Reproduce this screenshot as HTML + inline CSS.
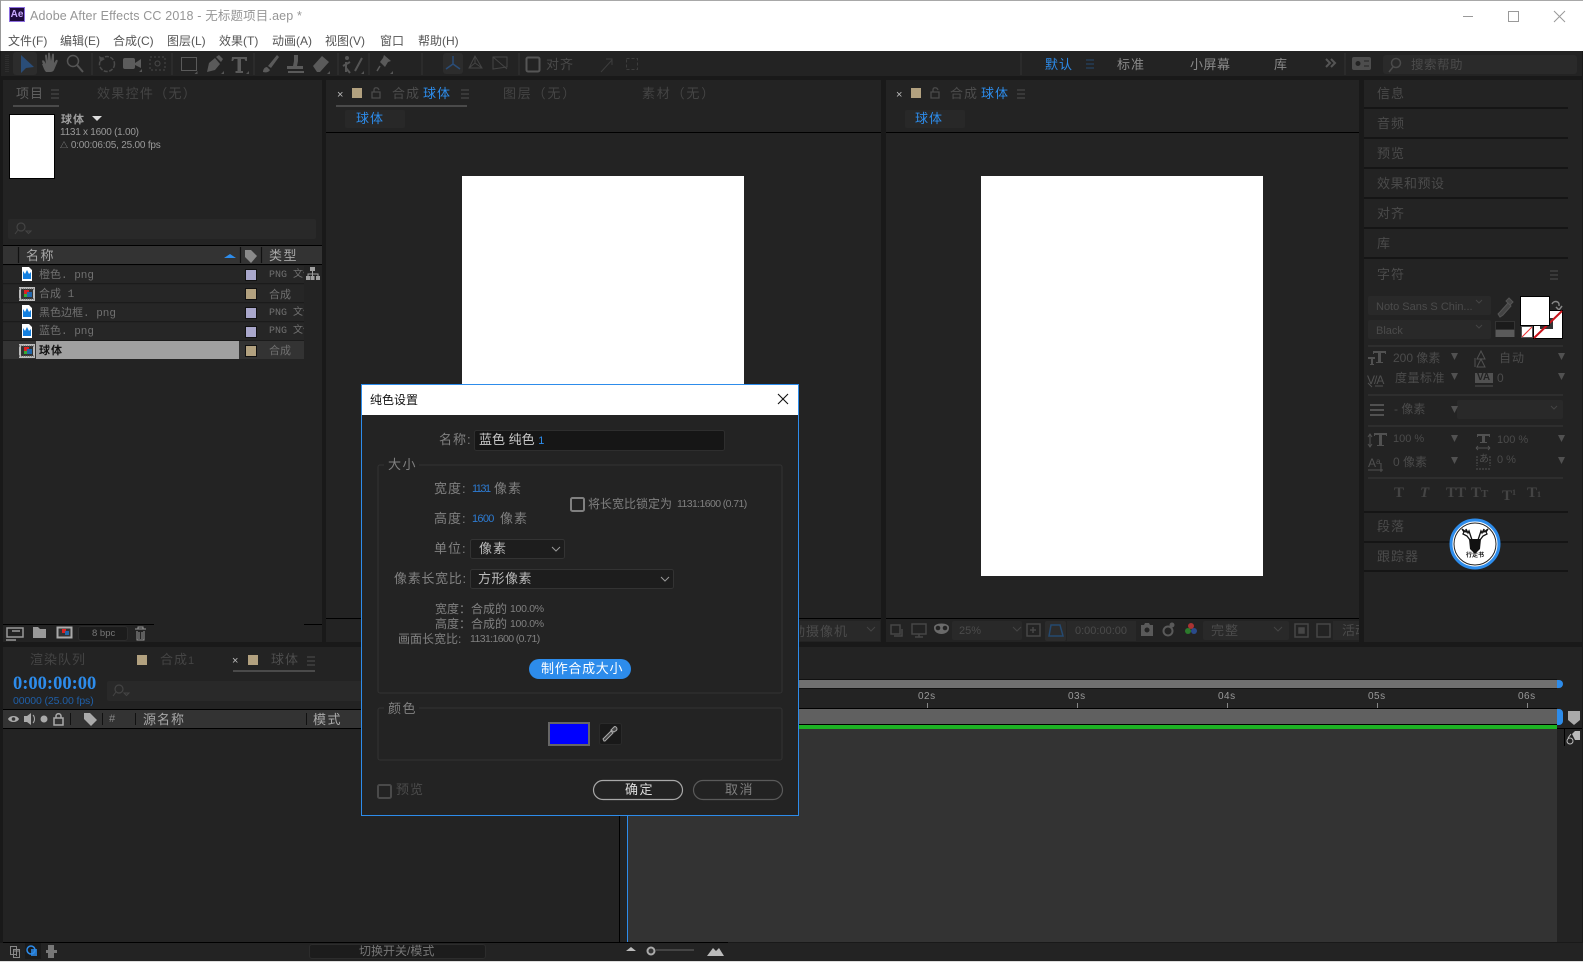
<!DOCTYPE html>
<html lang="zh-CN"><head><meta charset="utf-8"><title>Adobe After Effects CC 2018</title>
<style>
*{box-sizing:border-box}
html,body{margin:0;padding:0;background:#191919}
#r{position:relative;width:1583px;height:962px;overflow:hidden;background:#191919;font-family:"Liberation Sans","WenQuanYi Zen Hei","Noto Sans CJK SC",sans-serif;font-size:12px;color:#777}
#r div,#r span.t{position:absolute}
.t{line-height:20px;height:20px;white-space:nowrap}
.n{font-family:"Liberation Sans","Noto Sans CJK SC",sans-serif}
.d{color:#4b4b4b}.b{color:#2d8ceb}.g{color:#8a8a8a}
.m{font-family:"Liberation Mono","WenQuanYi Zen Hei",monospace}
svg{position:absolute;left:0;top:0}
</style></head><body><div id="r">
<div style="left:0;top:0;width:1583px;height:51px;background:#fff;border-top:1px solid #a8a8a8"></div>
<div style="left:0;top:0;width:1px;height:51px;background:#999"></div>
<div style="left:9px;top:7px;width:16px;height:15px;background:#1e0a3c;border:1px solid #8d6fe0;color:#c9a9ff;font:bold 10px/13px 'Liberation Sans',sans-serif;text-align:center">Ae</div>
<div class="t n" style="left:30px;top:6px;color:#969696;font-size:12.5px;letter-spacing:.15px">Adobe After Effects CC 2018 - 无标题项目.aep *</div>
<div class="t n" style="left:8px;top:31px;color:#555;font-size:12px">文件(F)</div>
<div class="t n" style="left:60px;top:31px;color:#555;font-size:12px">编辑(E)</div>
<div class="t n" style="left:113px;top:31px;color:#555;font-size:12px">合成(C)</div>
<div class="t n" style="left:167px;top:31px;color:#555;font-size:12px">图层(L)</div>
<div class="t n" style="left:219px;top:31px;color:#555;font-size:12px">效果(T)</div>
<div class="t n" style="left:272px;top:31px;color:#555;font-size:12px">动画(A)</div>
<div class="t n" style="left:325px;top:31px;color:#555;font-size:12px">视图(V)</div>
<div class="t n" style="left:380px;top:31px;color:#555;font-size:12px">窗口</div>
<div class="t n" style="left:418px;top:31px;color:#555;font-size:12px">帮助(H)</div>
<!-- toolbar -->
<div style="left:1px;top:51px;width:1581px;height:25px;background:#232323"></div>
<div style="left:13px;top:52px;width:24px;height:23px;background:#2c2c2c;border-radius:3px"></div>
<div style="left:443px;top:53px;width:20px;height:21px;background:#2c2c2c;border-radius:3px"></div>
<div style="left:1383px;top:55px;width:194px;height:19px;background:#2a2a2a;border-radius:3px"></div>
<div class="t d" style="left:546px;top:55px;font-size:13px;letter-spacing:1px">对齐</div>
<div class="t b" style="left:1045px;top:55px;font-size:13px;letter-spacing:1px">默认</div>
<div class="t g" style="left:1117px;top:55px;font-size:13px;letter-spacing:1px">标准</div>
<div class="t g" style="left:1190px;top:55px;font-size:13px;letter-spacing:.5px">小屏幕</div>
<div class="t g" style="left:1274px;top:55px;font-size:13px">库</div>
<div class="t d" style="left:1411px;top:55px;font-size:12.5px;letter-spacing:.5px">搜索帮助</div>
<!-- panels -->
<div style="left:3px;top:80px;width:319px;height:562px;background:#232323"></div>
<div style="left:326px;top:80px;width:555px;height:562px;background:#232323"></div>
<div style="left:886px;top:80px;width:473px;height:562px;background:#232323"></div>
<div style="left:1364px;top:80px;width:218px;height:562px;background:#232323"></div>
<!-- project panel -->
<div class="t" style="left:16px;top:84px;color:#5f5f5f;font-size:13px;letter-spacing:1px">项目</div>
<div style="left:13px;top:105px;width:46px;height:2px;background:#4a4a4a"></div>
<div class="t d" style="left:97px;top:84px;font-size:13px;letter-spacing:1.3px;color:#444">效果控件（无）</div>
<div style="left:8.5px;top:114px;width:46px;height:65px;background:#fff;border:1px solid #000"></div>
<div class="t" style="left:61px;top:110px;font-size:11px;color:#a0a0a0;font-weight:bold;letter-spacing:1px">球体</div>
<div class="t g" style="left:60px;top:123px;font-size:10px;letter-spacing:-.25px;color:#999">1131 x 1600 (1.00)</div>
<div class="t g" style="left:60px;top:136px;font-size:10px;letter-spacing:-.2px;color:#999"><span style="font-size:8px;margin-right:3px">&#9651;</span>0:00:06:05, 25.00 fps</div>
<div style="left:8px;top:219px;width:308px;height:20px;background:#292929;border-radius:2px"></div>
<div style="left:3px;top:245px;width:319px;height:20px;background:#333;border-top:1px solid #000;border-bottom:1px solid #000"></div>
<div class="t" style="left:26px;top:246px;color:#a8a8a8;font-size:13px;letter-spacing:1.5px">名称</div>
<div class="t" style="left:269px;top:246px;color:#a8a8a8;font-size:13px;letter-spacing:1.5px">类型</div>
<div style="left:3px;top:266px;width:301px;height:18px;background:#262626;border-bottom:1px solid #1b1b1b"></div>
<div style="left:3px;top:285px;width:301px;height:18px;background:#262626;border-bottom:1px solid #1b1b1b"></div>
<div style="left:3px;top:304px;width:301px;height:18px;background:#262626;border-bottom:1px solid #1b1b1b"></div>
<div style="left:3px;top:323px;width:301px;height:18px;background:#262626;border-bottom:1px solid #1b1b1b"></div>
<div style="left:3px;top:341px;width:301px;height:18px;background:#333"></div>
<div style="left:36px;top:341px;width:203px;height:18px;background:#a0a0a0"></div>
<div class="t m" style="left:39px;top:266px;font-size:11px;color:#707070">橙色. png</div>
<div class="t m" style="left:39px;top:285px;font-size:11px;color:#707070">合成 1</div>
<div class="t m" style="left:39px;top:304px;font-size:11px;color:#707070">黑色边框. png</div>
<div class="t m" style="left:39px;top:322px;font-size:11px;color:#707070">蓝色. png</div>
<div class="t" style="left:39px;top:341px;font-size:11px;color:#111;font-weight:bold;letter-spacing:1px">球体</div>
<div style="left:246px;top:270px;width:10px;height:10px;background:#a9a7cb;outline:1px solid #111"></div>
<div style="left:246px;top:289px;width:10px;height:10px;background:#b2a17f;outline:1px solid #111"></div>
<div style="left:246px;top:308px;width:10px;height:10px;background:#a9a7cb;outline:1px solid #111"></div>
<div style="left:246px;top:327px;width:10px;height:10px;background:#a9a7cb;outline:1px solid #111"></div>
<div style="left:246px;top:346px;width:10px;height:10px;background:#b2a17f;outline:1px solid #111"></div>
<div class="t m" style="left:269px;top:266px;width:35px;overflow:hidden;font-size:10px;color:#707070">PNG 文件</div>
<div class="t" style="left:269px;top:285px;font-size:11px;color:#707070">合成</div>
<div class="t m" style="left:269px;top:304px;width:35px;overflow:hidden;font-size:10px;color:#707070">PNG 文件</div>
<div class="t m" style="left:269px;top:322px;width:35px;overflow:hidden;font-size:10px;color:#707070">PNG 文件</div>
<div class="t" style="left:269px;top:341px;font-size:11px;color:#707070">合成</div>
<div style="left:3px;top:624px;width:151px;height:1px;background:#000"></div>
<div style="left:304px;top:624px;width:18px;height:1px;background:#000"></div>
<div style="left:78px;top:626px;width:50px;height:15px;background:#1c1c1c;border:1px solid #2c2c2c;border-radius:3px"></div>
<div class="t" style="left:92px;top:624px;font-size:9.5px;color:#777">8 bpc</div>
<!-- comp 1 -->
<div class="t" style="left:392px;top:84px;color:#4d4d4d;font-size:13px;letter-spacing:1px">合成</div>
<div class="t b" style="left:423px;top:84px;font-size:13px;letter-spacing:1px">球体</div>
<div class="t" style="left:337px;top:85px;font-size:11px;color:#bbb">×</div>
<div style="left:352px;top:88px;width:10px;height:10px;background:#b2a17f"></div>
<div style="left:336px;top:105px;width:131px;height:2px;background:#4a4a4a"></div>
<div class="t d" style="left:503px;top:84px;font-size:13px;letter-spacing:1.8px;color:#444">图层（无）</div>
<div class="t d" style="left:642px;top:84px;font-size:13px;letter-spacing:1.8px;color:#444">素材（无）</div>
<div style="left:345px;top:110px;width:60px;height:18px;background:#282828;border-radius:2px"></div>
<div class="t b" style="left:356px;top:109px;font-size:13px;letter-spacing:1px">球体</div>
<div style="left:326px;top:132px;width:555px;height:1px;background:#000"></div>
<div style="left:462px;top:176px;width:282px;height:400px;background:#fff"></div>
<div style="left:326px;top:618px;width:555px;height:1px;background:#000"></div>
<div style="left:800px;top:621px;width:80px;height:20px;background:#292929"></div>
<div class="t d" style="left:800px;top:622px;width:48px;overflow:hidden;font-size:13px;letter-spacing:1px"><span style="position:absolute;right:0;top:0">动摄像机</span></div>
<!-- comp 2 -->
<div class="t" style="left:950px;top:84px;color:#4d4d4d;font-size:13px;letter-spacing:1px">合成</div>
<div class="t b" style="left:981px;top:84px;font-size:13px;letter-spacing:1px">球体</div>
<div class="t" style="left:896px;top:85px;font-size:11px;color:#bbb">×</div>
<div style="left:911px;top:88px;width:10px;height:10px;background:#b2a17f"></div>
<div style="left:905px;top:110px;width:60px;height:18px;background:#282828;border-radius:2px"></div>
<div class="t b" style="left:915px;top:109px;font-size:13px;letter-spacing:1px">球体</div>
<div style="left:886px;top:132px;width:473px;height:1px;background:#000"></div>
<div style="left:981px;top:176px;width:282px;height:400px;background:#fff"></div>
<div style="left:886px;top:618px;width:473px;height:1px;background:#000"></div>
<div style="left:952px;top:621px;width:70px;height:19px;background:#292929;border-radius:2px"></div>
<div class="t d" style="left:959px;top:621px;font-size:11px">25%</div>
<div style="left:1045px;top:621px;width:21px;height:20px;background:#2c2c2c;border-radius:2px"></div>
<div style="left:1067px;top:621px;width:69px;height:20px;background:#292929"></div>
<div class="t d" style="left:1075px;top:621px;font-size:11px">0:00:00:00</div>
<div style="left:1203px;top:621px;width:86px;height:19px;background:#292929;border-radius:2px"></div>
<div class="t d" style="left:1211px;top:621px;font-size:13px;letter-spacing:1px">完整</div>
<div style="left:1333px;top:621px;width:26px;height:19px;background:#292929;overflow:hidden"><span class="t d" style="position:absolute;left:9px;top:0;font-size:13px">活动</span></div>
<!-- right panel -->
<div class="t d" style="left:1377px;top:84px;font-size:13px;letter-spacing:1px">信息</div>
<div style="left:1364px;top:107px;width:204px;height:2px;background:#151515"></div>
<div class="t d" style="left:1377px;top:114px;font-size:13px;letter-spacing:1px">音频</div>
<div style="left:1364px;top:137px;width:204px;height:2px;background:#151515"></div>
<div class="t d" style="left:1377px;top:144px;font-size:13px;letter-spacing:1px">预览</div>
<div style="left:1364px;top:167px;width:204px;height:2px;background:#151515"></div>
<div class="t d" style="left:1377px;top:174px;font-size:13px;letter-spacing:.5px">效果和预设</div>
<div style="left:1364px;top:197px;width:204px;height:2px;background:#151515"></div>
<div class="t d" style="left:1377px;top:204px;font-size:13px;letter-spacing:1px">对齐</div>
<div style="left:1364px;top:227px;width:204px;height:2px;background:#151515"></div>
<div class="t d" style="left:1377px;top:234px;font-size:13px">库</div>
<div style="left:1364px;top:257px;width:204px;height:2px;background:#151515"></div>
<div class="t d" style="left:1377px;top:265px;font-size:13px;letter-spacing:1px">字符</div>
<div style="left:1368px;top:296px;width:123px;height:19px;background:#292929;border-radius:2px"></div>
<div class="t n d" style="left:1376px;top:297px;font-size:11px;color:#4b4b4b">Noto Sans S Chin...</div>
<div style="left:1368px;top:320px;width:123px;height:19px;background:#292929;border-radius:2px"></div>
<div class="t n d" style="left:1376px;top:321px;font-size:11px;color:#4b4b4b">Black</div>
<div style="left:1368px;top:345px;width:195px;height:2px;background:#2e2e2e"></div>
<div style="left:1368px;top:394px;width:195px;height:2px;background:#2e2e2e"></div>
<div style="left:1368px;top:425px;width:195px;height:2px;background:#2e2e2e"></div>
<div style="left:1368px;top:477px;width:195px;height:2px;background:#2e2e2e"></div>
<div class="t d" style="left:1393px;top:348px;font-size:12px">200 像素</div>
<div class="t d" style="left:1499px;top:348px;font-size:12px;letter-spacing:1px">自动</div>
<div class="t d" style="left:1395px;top:368px;font-size:12px;letter-spacing:.5px">度量标准</div>
<div class="t d" style="left:1497px;top:368px;font-size:12px">0</div>
<div class="t d" style="left:1394px;top:399px;font-size:12px">- 像素</div>
<div style="left:1457px;top:400px;width:106px;height:19px;background:#292929;border-radius:2px"></div>
<div class="t d" style="left:1393px;top:429px;font-size:11px">100 %</div>
<div class="t d" style="left:1497px;top:430px;font-size:11px">100 %</div>
<div class="t d" style="left:1393px;top:452px;font-size:12px">0 像素</div>
<div class="t d" style="left:1497px;top:450px;font-size:11px">0 %</div>
<div class="t" style="left:1394px;top:483px;font:bold 15px/20px 'Liberation Serif',serif;color:#444">T</div>
<div class="t" style="left:1420px;top:483px;font:italic bold 15px/20px 'Liberation Serif',serif;color:#444">T</div>
<div class="t" style="left:1446px;top:483px;font:bold 15px/20px 'Liberation Serif',serif;color:#444">TT</div>
<div class="t" style="left:1471px;top:483px;font:bold 15px/20px 'Liberation Serif',serif;color:#444">T<span style="font-size:11px">T</span></div>
<div class="t" style="left:1502px;top:483px;font:bold 15px/20px 'Liberation Serif',serif;color:#444">T<span style="font-size:8px;vertical-align:5px">1</span></div>
<div class="t" style="left:1527px;top:483px;font:bold 15px/20px 'Liberation Serif',serif;color:#444">T<span style="font-size:8px">1</span></div>
<div style="left:1364px;top:511px;width:204px;height:2px;background:#151515"></div>
<div class="t d" style="left:1377px;top:517px;font-size:13px;letter-spacing:1px">段落</div>
<div style="left:1364px;top:541px;width:204px;height:2px;background:#151515"></div>
<div class="t d" style="left:1377px;top:547px;font-size:13px;letter-spacing:1px">跟踪器</div>
<div style="left:1364px;top:570px;width:204px;height:2px;background:#151515"></div>
<!-- timeline -->
<div style="left:3px;top:647px;width:1579px;height:295px;background:#232323"></div>
<div class="t d" style="left:30px;top:650px;font-size:13px;letter-spacing:1px;color:#444">渲染队列</div>
<div style="left:137px;top:655px;width:10px;height:10px;background:#b2a17f"></div>
<div class="t d" style="left:160px;top:650px;font-size:13px;letter-spacing:1px;color:#444">合成<span style="font-size:11px">1</span></div>
<div class="t" style="left:232px;top:651px;font-size:11px;color:#bbb">×</div>
<div style="left:248px;top:655px;width:10px;height:10px;background:#b2a17f"></div>
<div class="t" style="left:271px;top:650px;font-size:13px;letter-spacing:1px;color:#4d4d4d">球体</div>
<div style="left:233px;top:670px;width:82px;height:2px;background:#4a4a4a"></div>
<div class="t" style="left:13px;top:674px;font:bold 18.5px/20px 'Liberation Serif',serif;color:#2d8ceb">0:00:00:00</div>
<div class="t" style="left:13px;top:691px;font-size:10.5px;letter-spacing:-.1px;color:#1f5fa8">00000 (25.00 fps)</div>
<div style="left:107px;top:681px;width:262px;height:20px;background:#292929;border-radius:2px"></div>
<div style="left:3px;top:709px;width:616px;height:20px;background:#333;border-top:1px solid #000;border-bottom:1px solid #000"></div>
<div class="t" style="left:109px;top:709px;font-size:11px;color:#888">#</div>
<div class="t" style="left:143px;top:710px;font-size:13px;letter-spacing:1px;color:#a8a8a8">源名称</div>
<div class="t" style="left:313px;top:710px;font-size:13px;letter-spacing:1.5px;color:#a8a8a8">模式</div>
<div style="left:619px;top:709px;width:1px;height:233px;background:#000"></div>
<div style="left:627px;top:729px;width:930px;height:213px;background:#333"></div>
<div style="left:627px;top:729px;width:1px;height:213px;background:#2d8ceb"></div>
<div style="left:620px;top:679px;width:937px;height:10px;background:#707070;border-top:1px solid #111;border-bottom:1px solid #111"></div>
<div style="left:1557px;top:680px;width:6px;height:8px;background:#2d8ceb;border-radius:0 4px 4px 0"></div>
<div style="left:620px;top:708px;width:937px;height:17px;background:#606060;border-top:1px solid #000;border-bottom:1px solid #000"></div>
<div style="left:620px;top:725px;width:937px;height:4px;background:#1db224"></div>
<div style="left:1557px;top:709px;width:6px;height:16px;background:#2d8ceb;border-radius:0 4px 4px 0"></div>
<div class="t" style="left:918px;top:687px;font-size:10px;letter-spacing:.5px;color:#999">02s</div>
<div class="t" style="left:1068px;top:687px;font-size:10px;letter-spacing:.5px;color:#999">03s</div>
<div class="t" style="left:1218px;top:687px;font-size:10px;letter-spacing:.5px;color:#999">04s</div>
<div class="t" style="left:1368px;top:687px;font-size:10px;letter-spacing:.5px;color:#999">05s</div>
<div class="t" style="left:1518px;top:687px;font-size:10px;letter-spacing:.5px;color:#999">06s</div>
<div style="left:927px;top:703px;width:1px;height:5px;background:#888"></div>
<div style="left:1077px;top:703px;width:1px;height:5px;background:#888"></div>
<div style="left:1227px;top:703px;width:1px;height:5px;background:#888"></div>
<div style="left:1377px;top:703px;width:1px;height:5px;background:#888"></div>
<div style="left:1527px;top:703px;width:1px;height:5px;background:#888"></div>
<div style="left:1557px;top:728px;width:25px;height:1px;background:#000"></div>
<div style="left:1564px;top:729px;width:1px;height:17px;background:#000"></div>
<!-- status -->
<div style="left:3px;top:942px;width:725px;height:1px;background:#000"></div>
<div style="left:0;top:943px;width:1583px;height:18px;background:#232323"></div>
<div style="left:309px;top:944px;width:177px;height:15px;background:#1c1c1c;border:1px solid #2c2c2c;border-radius:3px"></div>
<div class="t" style="left:359px;top:941px;font-size:12px;color:#777">切换开关/模式</div>
<div style="left:25px;top:943px;width:16px;height:16px;background:#1b1b1b"></div>
<div style="left:0;top:961px;width:1583px;height:1px;background:#ddd"></div>
<!-- icons -->
<svg width="1583" height="962" viewBox="0 0 1583 962" fill="none">
<path d="M1463 16.5h10" stroke="#999"/>
<rect x="1508.5" y="11.5" width="10" height="10" stroke="#999"/>
<path d="M1554 11l11 11M1565 11l-11 11" stroke="#999"/>
<!-- toolbar -->
<path d="M6 55v18M8 55v18" stroke="#3a3a3a" stroke-dasharray="1 1"/>
<path d="M21 55v18l5-5 8-1z" fill="#2a4d78"/>
<path d="M43 64c-2-4 0-5 2-2l1 2-1-8c0-2 2-2 2 0l1 5v-7c0-2 2-2 2 0l1 7 1-6c0-2 2-2 2 0v8l2-3c2-1 2 1 1 3l-3 7c-1 2-3 2-5 2h-3c-2-2-3-6-4-8z" fill="#5c5c5c"/>
<circle cx="73" cy="61" r="5.5" stroke="#555" stroke-width="1.5"/><path d="M77 65l6 7" stroke="#555" stroke-width="2"/>
<path d="M92 53v22M172 53v22M254 53v22M338 53v22M369 53v22M422 53v22M519 53v22M1021 53v22M1345 53v22" stroke="#2e2e2e" stroke-width="1.5"/>
<circle cx="107" cy="64" r="7.5" stroke="#4a4a4a" stroke-width="1.5" stroke-dasharray="4 1.500"/><path d="M99 56l1 6 5-3z" fill="#4a4a4a"/>
<rect x="123" y="58" width="12" height="11" rx="2" fill="#5c5c5c"/><path d="M135 63l6-4v9l-6-3z" fill="#5c5c5c"/>
<rect x="150" y="57" width="15" height="13" stroke="#4a4a4a" stroke-dasharray="2 2"/><circle cx="157.500" cy="63.500" r="2.500" stroke="#4a4a4a"/>
<rect x="181.500" y="57.500" width="15" height="13" stroke="#5a5a5a"/>
<path d="M207 72l2-9 6-5 5 6-5 6zM216 57l3-2 4 4-2 3z" fill="#5a5a5a"/>
<path d="M232 57h15v4h-1.500l-1-2h-3.500v12h2v2h-7.500v-2h2v-12h-3.500l-1 2h-1.500z" fill="#5a5a5a"/>
<path d="M263 72c0-3 2-5 4-5l3 3c-1 2-4 3-7 2zM268 66l9-11 2 2-8 11z" fill="#5a5a5a"/>
<path d="M294 55h4v6l-1 5h6v3h-16v-3h6l1-5zM288 71h16v2h-16z" fill="#5a5a5a"/>
<path d="M313 66l9-10 7 6-9 10h-3z" fill="#5a5a5a"/>
<circle cx="347" cy="58" r="2" fill="#555"/><path d="M346 62v10M350 62l-7 4M350 73l-4-5M355 71l7-13" stroke="#555" stroke-width="2"/>
<path d="M384 55l7 6-3 1-3 5-5-5 3-4z" fill="#5a5a5a"/><path d="M380 66l-3 5" stroke="#5a5a5a" stroke-width="1.500"/>
<path d="M142 72h-3l3-3zM197.500 74h-3l3-3zM224 74h-3l3-3zM249 74h-3l3-3zM330 74h-3l3-3zM364 74h-3l3-3zM393 74h-3l3-3z" fill="#555"/>
<path d="M453 64v-8M453 64l-7 5M453 64l7 5" stroke="#2a4d78" stroke-width="1.500"/>
<path d="M475 56l-6 12h13zM475 56v7M469 68l6-5 7 5" stroke="#444"/>
<path d="M493 57l14 12M493 57v12l14-2V57z" stroke="#444"/>
<rect x="526.500" y="57.500" width="13" height="14" rx="1.500" stroke="#555" stroke-width="2"/>
<path d="M601 72l11-12M606 59h6v6" stroke="#3d3d3d"/>
<rect x="626.500" y="58.500" width="11" height="11" stroke="#3d3d3d" stroke-dasharray="3 2"/>
<path d="M1086 60h8M1086 64h8M1086 68h8" stroke="#25496f"/>
<path d="M1326 59l4 4-4 4M1331 59l4 4-4 4" stroke="#555" stroke-width="2"/>
<rect x="1352" y="57" width="19" height="13" rx="2" fill="#4d4d4d"/><circle cx="1358" cy="63.500" r="2.500" fill="#232323"/><path d="M1364 61h5M1364 66h5" stroke="#232323"/>
<circle cx="1396" cy="63" r="4.500" stroke="#4a4a4a" stroke-width="1.500"/><path d="M1393 67l-4 5" stroke="#4a4a4a" stroke-width="1.500"/>
<!-- panel menus -->
<path d="M51 90h8M51 94h8M51 98h8M461 90h8M461 94h8M461 98h8M1017 90h8M1017 94h8M1017 98h8M307 657h8M307 661h8M307 665h8M1550 271h8M1550 275h8M1550 279h8" stroke="#4f4f4f"/>
<path d="M372 92h8v6h-8zM374 92v-2c0-3 4-3 5 0" stroke="#4a4a4a" stroke-width="1.300"/>
<path d="M931 92h8v6h-8zM933 92v-2c0-3 4-3 5 0" stroke="#4a4a4a" stroke-width="1.300"/>
<path d="M92 116h10l-5 5z" fill="#ddd"/>
<!-- project -->
<circle cx="21" cy="227" r="4" stroke="#444" stroke-width="1.200"/><path d="M18 230l-3 4M26 231h5l-2.500 2.500z" stroke="#444"/>
<path d="M18.500 247v16M240.500 247v16M261.500 247v16" stroke="#111" stroke-width="1.200"/>
<path d="M224 258h12l-6-4z" fill="#2d8ceb"/>
<path d="M245 250h6l6 6-6 7-6-6z" fill="#8a8a8a"/>
<path d="M310 267h5v4h-5zM306 276h4v4h-4zM310.500 276h4v4h-4zM316 276h4v4h-4z" fill="#a0a0a0"/><path d="M308 276v-2h10v2M312.500 271v5" stroke="#a0a0a0"/>
<g fill="#fff"><path d="M22 267h7l3 3v11h-10zM22 324h7l3 3v11h-10zM22 305h7l3 3v11h-10z"/></g>
<g fill="#1480e0"><path d="M23 279v-8l2 3 2-4 2 4 2-2v7z"/><path d="M23 336v-8l2 3 2-4 2 4 2-2v7z"/><path d="M23 317v-8l2 3 2-4 2 4 2-2v7z"/></g>
<g id="c"><rect x="20" y="288" width="14" height="12" fill="#333" stroke="#bbb" stroke-width="2"/><path d="M19 289h16M19 299h16" stroke="#555" stroke-dasharray="1 1"/><rect x="24" y="290" width="5" height="5" fill="#d22"/><rect x="27" y="292" width="5" height="5" fill="#26a"/><rect x="24" y="294" width="3" height="3" fill="#3a3"/></g>
<g transform="translate(0 57)"><rect x="20" y="288" width="14" height="12" fill="#333" stroke="#bbb" stroke-width="2"/><path d="M19 289h16M19 299h16" stroke="#555" stroke-dasharray="1 1"/><rect x="24" y="290" width="5" height="5" fill="#d22"/><rect x="27" y="292" width="5" height="5" fill="#26a"/><rect x="24" y="294" width="3" height="3" fill="#3a3"/></g>
<!-- project footer -->
<path d="M7 628h16v9H7zM12 631h8M6 640h10" stroke="#9a9a9a" stroke-width="1.500"/>
<path d="M33 627h5l2 2h6v9H33z" fill="#9a9a9a"/>
<rect x="57.500" y="627.500" width="14" height="10" fill="#333" stroke="#aaa" stroke-width="2"/><rect x="62" y="629" width="4" height="4" fill="#d22"/><rect x="65" y="631" width="4" height="4" fill="#26a"/>
<path d="M135 629h11M138 629v-2h5v2M137 631v9h7v-9M139 632v7M142 632v7" stroke="#999"/>
<!-- comp footer -->
<g stroke="#464646" stroke-width="1.500">
<rect x="891" y="625" width="9" height="9"/><path d="M902 629v7h-8"/>
<rect x="912" y="624" width="14" height="10"/><path d="M919 634v3M915 637h8"/>
<rect x="1027" y="624" width="13" height="12"/><path d="M1033 627v6M1030 630h6"/>
<path d="M1049 636l2-11h9l3 11z" stroke="#25496f"/>
<rect x="1295" y="624" width="13" height="13"/><rect x="1299" y="628" width="5" height="5" fill="#464646"/>
<rect x="1317" y="624" width="13" height="13"/>
</g>
<path d="M934 628c-1-6 16-6 15 0 0 4-4 6-7.500 6s-7.500-2-7.500-6z" fill="#6a6a6a"/><circle cx="938" cy="628" r="2.300" fill="#232323"/><circle cx="945" cy="628" r="2.300" fill="#232323"/>
<path d="M1141 625h3l1-2h4l1 2h3v11h-12z" fill="#5a5a5a"/><circle cx="1147" cy="630" r="2.500" fill="#232323"/>
<circle cx="1168" cy="631" r="4.500" stroke="#5a5a5a" stroke-width="2"/><circle cx="1172" cy="625" r="2.500" fill="#5a5a5a"/>
<circle cx="1191" cy="626" r="3" fill="#a33"/><circle cx="1188" cy="631" r="3" fill="#2c7a2c"/><circle cx="1194" cy="631" r="3" fill="#2a4a8a"/>
<path d="M1274 627l4 4 4-4M1013 627l4 4 4-4M867 627l4 4 4-4" stroke="#444"/>
<!-- right panel -->
<path d="M1476 300l3 3 3-3M1476 325l3 3 3-3M1551 406l3 3 3-3" stroke="#444"/>
<path d="M1498 314l2-2 8-9 3 3-8 9-3 2zM1506 301l3-3 4 4-3 3z" stroke="#555" fill="#444"/>
<rect x="1495.500" y="321.500" width="19" height="8" fill="#1b1b1b" stroke="#333"/><rect x="1495.500" y="330" width="19" height="7" fill="#5a5a5a"/>
<path d="M1552 304c2-4 8-3 7 2M1556 307l3 3 3-4" stroke="#888" stroke-width="1.500"/>
<rect x="1533.500" y="310.500" width="29" height="28" fill="#fff" stroke="#000"/>
<rect x="1540" y="318" width="13" height="11" fill="#333"/>
<path d="M1534 338l28-27" stroke="#c8131b" stroke-width="2"/>
<rect x="1520.500" y="296.500" width="29" height="29" fill="#fff" stroke="#000"/>
<rect x="1521.500" y="326.500" width="11" height="11" fill="#fff" stroke="#555"/><path d="M1522 337l10-10" stroke="#e33"/>
<g fill="#515151">
<path d="M1373 351h13v3h-1v-1h-4v9h2v1h-7v-1h2v-9h-4v1h-1zM1368 357h7v2h-2v5h1v1h-4v-1h1v-5h-3z"/>
<path d="M1451 353h7l-3.500 7zM1558 353h7l-3.500 7zM1451 373h7l-3.500 7zM1558 373h7l-3.500 7zM1451 406h7l-3.500 7zM1451 435h7l-3.500 7zM1558 435h7l-3.500 7zM1451 457h7l-3.500 7zM1558 457h7l-3.500 7z"/>
<path d="M1370 404h14v2h-14zM1370 409h14v2h-14zM1370 414h14v2h-14z"/>
<path d="M1374 433h13v3h-1v-1h-4v10h2v1h-7v-1h2v-10h-4v1h-1zM1477 434h13v3h-1v-1h-4v6h2v1h-7v-1h2v-6h-4v1h-1z"/>
<path d="M1475 373h18v10h-18z"/>
</g>
<g stroke="#515151"><path d="M1481 351l-4 8h8zM1481 359l-4 8h8zM1475 358v9" fill="none"/><path d="M1475 386h18M1368 383l4 4M1375 386h8" /><path d="M1370 434v13M1368 437l2-3 2 3M1368 444l2 3 2-3" fill="none"/><path d="M1476 448h14M1476 448l2-2M1476 448l2 2M1490 448l-2-2M1490 448l-2 2"/><path d="M1368 470h15M1381 463v9" fill="none"/><path d="M1477 456v10M1490 456v10M1476 469h14" stroke-dasharray="2 1"/></g>
<!-- badge -->
<circle cx="1475" cy="544" r="24" fill="#fff" stroke="#2d8ceb" stroke-width="3"/>
<circle cx="1475" cy="544" r="21" stroke="#222"/>
<path d="M1469 539h12l-1 10-4 4h-2l-4-4z" fill="#111"/>
<path d="M1470 540l-3-4-4-2 1-2-2-3 4 3v-3l2 4 1-2 2 6 1 3M1480 540l3-4 4-2-1-2 2-3-4 3v-3l-2 4-1-2-2 6-1 3" stroke="#111" stroke-width="1.300"/>
<!-- timeline header -->
<circle cx="119" cy="689" r="4" stroke="#444" stroke-width="1.200"/><path d="M116 692l-3 4M124 693h5l-2.500 2.500z" stroke="#444"/>
<path d="M8 719c2-4 9-4 11 0-2 4-9 4-11 0z" fill="#aaa"/><circle cx="13.500" cy="719" r="1.800" fill="#333"/>
<path d="M24 716h3l4-3v12l-4-3h-3z" fill="#aaa"/><path d="M33 715c2 2 2 6 0 8" stroke="#aaa"/>
<circle cx="44" cy="719" r="3.500" fill="#aaa"/>
<path d="M54 718h9v7h-9zM56 718v-2c0-3 5-3 5 0v2" stroke="#aaa" stroke-width="1.500"/>
<path d="M70.500 713v12M102.500 713v12M135.500 713v12M306.500 713v12" stroke="#111"/>
<path d="M84 713h6l7 7-6 6-7-7z" fill="#aaa"/>
<!-- timeline right -->
<path d="M1568 711h12v9l-6 5-6-5z" fill="#aaa"/>
<path d="M1572 734l3-3h5v9h-5z" fill="#bbb"/><circle cx="1570" cy="741" r="3" stroke="#bbb"/><path d="M1568 738l3-4" stroke="#bbb"/>
<!-- status icons -->
<path d="M10.500 946.500h6v8h-6zM13.500 949.500h6v8h-6z" stroke="#888" fill="#232323"/><path d="M14 951h5M16.500 951v5" stroke="#888"/>
<circle cx="31" cy="950" r="4" stroke="#2d8ceb" stroke-width="1.500"/><rect x="31" y="949" width="6" height="7" fill="#2d8ceb" opacity=".8"/>
<path d="M48 945h6v5h3v3h-3v5h-6v-5h-2v-3h2z" fill="#777"/>
<path d="M626 951l5-4 5 4z" fill="#bbb"/>
<path d="M656 950h38" stroke="#444" stroke-width="2"/>
<circle cx="651" cy="951" r="3.500" fill="#333" stroke="#aaa" stroke-width="2"/>
<path d="M707 956l6-8 3 3 3-3 5 8z" fill="#bbb"/>
</svg>
<div class="t" style="left:1466px;top:546px;font-size:6px;font-weight:bold;color:#111">行走书</div>
<div class="t" style="left:1367px;top:370px;font:12px/20px 'Liberation Sans',sans-serif;color:#515151;letter-spacing:-1px">V/A</div>
<div class="t" style="left:1477px;top:368px;font:bold 10px/20px 'Liberation Sans',sans-serif;color:#232323">VA</div>
<div class="t" style="left:1368px;top:452px;font:12px/20px 'Liberation Sans',sans-serif;color:#515151">A<span style="font-size:8px;vertical-align:3px">a</span></div>
<div class="t" style="left:1479px;top:450px;font-size:10px;color:#515151">あ</div>
<!-- dialog -->
<div style="left:361px;top:384px;width:438px;height:432px;background:#232323;border:1px solid #2d8ceb">
<div style="left:0;top:0;width:436px;height:30px;background:#fff"></div>
</div>
<div class="t n" style="left:370px;top:390px;font-size:12px;color:#111">纯色设置</div>
<svg width="1583" height="962" viewBox="0 0 1583 962" fill="none" style="z-index:5">
<path d="M778 394l10 10M788 394l-10 10" stroke="#111" stroke-width="1.100"/>
<rect x="474.500" y="430.500" width="250" height="20" rx="2" fill="#161616" stroke="#2e2e2e"/>
<path d="M384 465h-4a2 2 0 0 0-2 2v224a2 2 0 0 0 2 2h400a2 2 0 0 0 2-2v-224a2 2 0 0 0-2-2H419" stroke="#333"/>
<path d="M384 708h-4a2 2 0 0 0-2 2v48a2 2 0 0 0 2 2h400a2 2 0 0 0 2-2v-48a2 2 0 0 0-2-2H419" stroke="#333"/>
<rect x="571" y="498" width="13" height="13" rx="1.500" stroke="#808080" stroke-width="2"/>
<rect x="470.500" y="539.500" width="94" height="19" rx="2" fill="#1d1d1d" stroke="#333"/>
<path d="M552 547l4 4 4-4" stroke="#999"/>
<rect x="470.500" y="569.500" width="203" height="19" rx="2" fill="#1d1d1d" stroke="#333"/>
<path d="M661 577l4 4 4-4" stroke="#999"/>
<rect x="529" y="659" width="102" height="20" rx="10" fill="#2d8ceb"/>
<rect x="549" y="723" width="40" height="22" fill="#00f" stroke="#666" stroke-width="2"/>
<rect x="599.500" y="723.500" width="22" height="21" rx="2" fill="#191919" stroke="#2a2a2a"/>
<path d="M604 741l-1-2 8-8 2 2-8 8zM611 730l3-3c1-1 3 0 3 2s-2 2-3 3z" stroke="#aaa" fill="#aaa" fill-opacity=".3"/>
<rect x="378" y="785" width="13" height="13" rx="1.500" stroke="#4a4a4a" stroke-width="2"/>
<rect x="593.500" y="780.500" width="89" height="19" rx="9.500" stroke="#a8a8a8" stroke-width="1.200"/>
<rect x="693.500" y="780.500" width="89" height="19" rx="9.500" stroke="#5a5a5a" stroke-width="1.200"/>
</svg>
<div style="left:0;top:0;width:1583px;height:962px;z-index:6">
<div class="t" style="left:439px;top:430px;font-size:13px;letter-spacing:1px;color:#808080">名称:</div>
<div class="t" style="left:479px;top:430px;font-size:13px;color:#c8c8c8">蓝色 纯色 <span style="color:#2d8ceb;font-size:11px">1</span></div>
<div class="t" style="left:388px;top:455px;font-size:13px;letter-spacing:1.500px;color:#808080">大小</div>
<div class="t" style="left:434px;top:479px;font-size:13px;letter-spacing:1px;color:#808080">宽度:</div>
<div class="t" style="left:472px;top:479px;font-size:11px;letter-spacing:-1.5px;color:#2d7ad0">1131</div>
<div class="t" style="left:494px;top:479px;font-size:13px;letter-spacing:1px;color:#808080">像素</div>
<div class="t" style="left:434px;top:509px;font-size:13px;letter-spacing:1px;color:#808080">高度:</div>
<div class="t" style="left:472px;top:509px;font-size:11px;letter-spacing:-.7px;color:#2d7ad0">1600</div>
<div class="t" style="left:500px;top:509px;font-size:13px;letter-spacing:1px;color:#808080">像素</div>
<div class="t" style="left:588px;top:494px;font-size:12px;color:#808080">将长宽比锁定为</div>
<div class="t" style="left:677px;top:494px;font-size:10.500px;letter-spacing:-.6px;color:#808080">1131:1600 (0.71)</div>
<div class="t" style="left:434px;top:539px;font-size:13px;letter-spacing:1px;color:#808080">单位:</div>
<div class="t" style="left:479px;top:539px;font-size:13px;letter-spacing:1px;color:#bbb">像素</div>
<div class="t" style="left:394px;top:569px;font-size:13px;letter-spacing:.7px;color:#808080">像素长宽比:</div>
<div class="t" style="left:478px;top:569px;font-size:13px;letter-spacing:.5px;color:#bbb">方形像素</div>
<div class="t" style="left:435px;top:599px;font-size:12px;color:#808080">宽度：</div>
<div class="t" style="left:471px;top:599px;font-size:12px;color:#808080">合成的</div>
<div class="t" style="left:510px;top:599px;font-size:10.500px;letter-spacing:-.3px;color:#808080">100.0%</div>
<div class="t" style="left:435px;top:614px;font-size:12px;color:#808080">高度：</div>
<div class="t" style="left:471px;top:614px;font-size:12px;color:#808080">合成的</div>
<div class="t" style="left:510px;top:614px;font-size:10.500px;letter-spacing:-.3px;color:#808080">100.0%</div>
<div class="t" style="left:398px;top:629px;font-size:12px;color:#808080">画面长宽比:</div>
<div class="t" style="left:470px;top:629px;font-size:10.500px;letter-spacing:-.6px;color:#808080">1131:1600 (0.71)</div>
<div class="t" style="left:541px;top:659px;font-size:13px;letter-spacing:.7px;color:#fff">制作合成大小</div>
<div class="t" style="left:388px;top:699px;font-size:13px;letter-spacing:1.500px;color:#808080">颜色</div>
<div class="t" style="left:396px;top:780px;font-size:13px;letter-spacing:1px;color:#4b4b4b">预览</div>
<div class="t" style="left:625px;top:780px;font-size:13px;letter-spacing:1.500px;color:#ddd">确定</div>
<div class="t" style="left:725px;top:780px;font-size:13px;letter-spacing:1.500px;color:#808080">取消</div>
</div>
</div></body></html>
